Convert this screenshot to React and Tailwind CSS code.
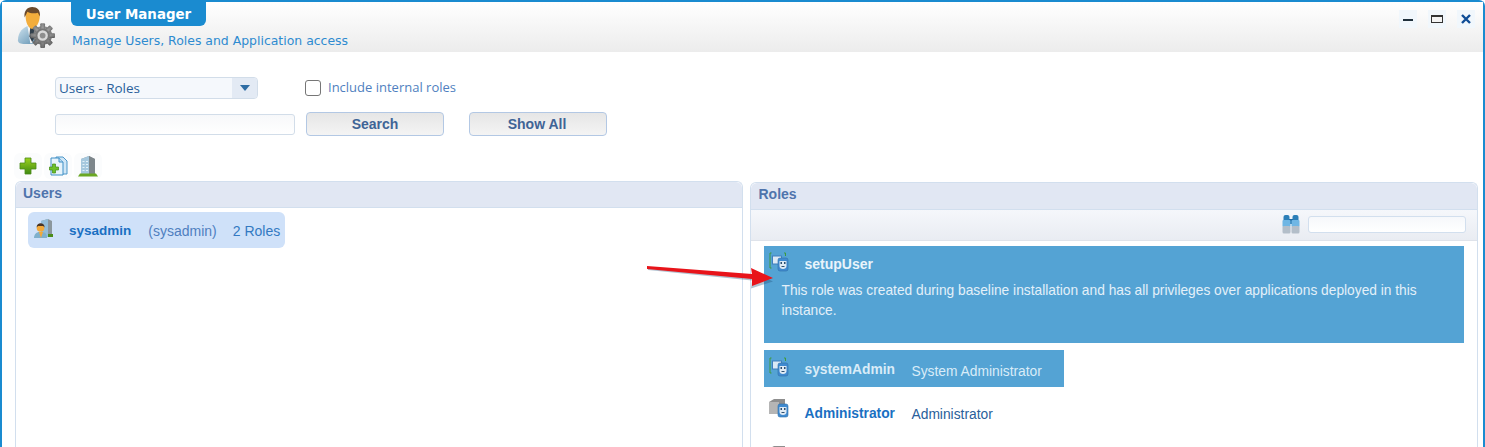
const arial = { fontFamily: '"Liberation Sans", Arial, sans-serif' };

function UserGear({ className }) {
  return (
    <svg viewBox="0 0 40 44" className={className}>
      <defs>
        <linearGradient id="ugBody" x1="0" y1="0" x2="1" y2="1"><stop offset="0" stopColor="#cfe3ef" /><stop offset="1" stopColor="#5d8faf" /></linearGradient>
        <radialGradient id="ugGear" cx="0.5" cy="0.4" r="0.7"><stop offset="0" stopColor="#b8b8b8" /><stop offset="1" stopColor="#5e5e5e" /></radialGradient>
      </defs>
      <path d="M1 36c0-9 6-14 11-15l7 1 4 13-7 5H8c-4 0-7-1-7-4z" fill="url(#ugBody)" />
      <path d="M11 21l5 2 4-2-4 18-2 0z" fill="#f4f4f4" />
      <path d="M14 22h4l1 10-3 6-3-6z" fill="#33414d" />
      <path d="M9 10c0-4 3-8 7-8s8 3 8 8c0 7-4 14-8 14s-7-7-7-14z" fill="#f3ad3c" />
      <path d="M8 12c-1-7 3-11 8-11s9 3 8 10l-2-4c-3 1-8 1-11-1z" fill="#6b4a2c" />
      <g fill="url(#ugGear)">
        <circle cx="27" cy="31" r="10" />
        <rect x="24.5" y="18" width="5" height="26" rx="1" />
        <rect x="14" y="28.5" width="26" height="5" rx="1" />
        <rect x="24.5" y="18" width="5" height="26" rx="1" transform="rotate(45 27 31)" />
        <rect x="24.5" y="18" width="5" height="26" rx="1" transform="rotate(-45 27 31)" />
      </g>
      <circle cx="27" cy="31" r="6.5" fill="#d9d9d9" stroke="#777" strokeWidth="2" />
      <circle cx="27" cy="31" r="3" fill="#8e8e8e" />
    </svg>
  );
}

function Plus({ className }) {
  return (
    <svg viewBox="0 0 18 18" className={className}>
      <defs><linearGradient id="plusG" x1="0" y1="0" x2="0" y2="1"><stop offset="0" stopColor="#9dd21f" /><stop offset="1" stopColor="#3f8a12" /></linearGradient></defs>
      <path d="M6 1h6v5h5v6h-5v5H6v-5H1V6h5z" fill="url(#plusG)" stroke="#4c8c1a" strokeWidth="0.8" />
    </svg>
  );
}

function CopyAdd({ className }) {
  return (
    <svg viewBox="0 0 20 20" className={className}>
      <path d="M8 1h7l4 4v13H8z" fill="#cfe6f6" stroke="#4d97c9" />
      <path d="M3 2h8l4 4v13H3z" fill="#e6f3fb" stroke="#3f8fc6" />
      <path d="M11 2v4h4" fill="#bcdcf1" stroke="#3f8fc6" />
      <path d="M1.500 11h3V8h3v3h3v3h-3v3h-3v-3h-3z" fill="#6cc02a" stroke="#3f8a12" strokeWidth="0.7" />
    </svg>
  );
}

function Building({ className }) {
  return (
    <svg viewBox="0 0 20 22" className={className}>
      <path d="M3 4l8-3 6 3v15H3z" fill="#8f9a9f" />
      <path d="M3 4l8-3v18H3z" fill="#a6c8de" />
      <path d="M11 1l6 3v15h-6z" fill="#7d868b" />
      <g fill="#e3f0f8">
        <rect x="4.500" y="6" width="2" height="1" /><rect x="8" y="6" width="2" height="1" />
        <rect x="4.500" y="9" width="2" height="1" /><rect x="8" y="9" width="2" height="1" />
        <rect x="4.500" y="12" width="2" height="1" /><rect x="8" y="12" width="2" height="1" />
        <rect x="4.500" y="15" width="2" height="1" /><rect x="8" y="15" width="2" height="1" />
      </g>
      <path d="M0 21.500l2-3h16l2 3z" fill="#6aa723" />
    </svg>
  );
}

function UserBuilding({ className }) {
  return (
    <svg viewBox="0 0 21 20" className={className}>
      <path d="M8 2l7-2 4 2v16H8z" fill="#8b979d" />
      <path d="M8 2l7-2v18H8z" fill="#94bdd8" />
      <path d="M15 15h5v3h-5z" fill="#4c8c1a" />
      <path d="M1 19c0-4 3-6 5-6h3c3 0 5 2 5 6z" fill="#7fb0cc" />
      <path d="M6 13h4l-2 6z" fill="#f2a93b" />
      <circle cx="7.500" cy="9" r="3.800" fill="#f2a93b" />
      <path d="M3.600 8.500c0-3 2-4.300 4-4.300s4 1.300 4 4.300l-1.500-1.500H5z" fill="#4a3524" />
    </svg>
  );
}

function Role({ kind }) {
  return (
    <svg viewBox="0 0 20 20" className="w-5 h-5 shrink-0">
      {kind === "green" ? (
        <g fill="none" stroke="#3f9a3c" strokeWidth="1">
          <path d="M2.500 1H1v15h1.500" />
          <path d="M15 1h1.500v3" />
        </g>
      ) : (
        <g>
          <path d="M0 4l5-3h11v13H0z" fill="#8e8e8e" />
          <path d="M0 4h10v12H0z" fill="#b5b5b5" />
        </g>
      )}
      {kind === "green" && <rect x="3.500" y="4" width="9" height="8" fill="#dbe9f5" stroke="#3f7fbd" />}
      <rect x="9" y="6" width="10" height="13" rx="2" fill="#3f8ad0" stroke="#2f6ea8" strokeWidth="0.6" />
      <path d="M10.500 9h7v5c0 2-1.500 3-3.500 3s-3.500-1-3.500-3z" fill="#dfeaf4" />
      <rect x="11.500" y="10" width="1.500" height="2" fill="#2d4f70" />
      <rect x="15" y="10" width="1.500" height="2" fill="#2d4f70" />
      <rect x="12.500" y="14" width="3" height="1" fill="#2d4f70" />
    </svg>
  );
}

function Binoculars({ className }) {
  return (
    <svg viewBox="0 0 18 20" className={className}>
      <rect x="1.500" y="1" width="6" height="8" rx="2" fill="#2c7fb8" />
      <rect x="10.500" y="1" width="6" height="8" rx="2" fill="#2c7fb8" />
      <rect x="7" y="5" width="4" height="5" fill="#1f6ea6" />
      <rect x="0.500" y="6" width="8" height="7" rx="1" fill="#6fb6e4" />
      <rect x="9.500" y="6" width="8" height="7" rx="1" fill="#6fb6e4" />
      <rect x="0.500" y="12" width="8" height="7.500" rx="1.500" fill="#b3bec9" />
      <rect x="9.500" y="12" width="8" height="7.500" rx="1.500" fill="#b3bec9" />
    </svg>
  );
}

function ToolIcon({ children }) {
  return <div className="w-7 h-[26px] rounded-md bg-[#fbfcfd] flex items-center justify-center">{children}</div>;
}

function WinBtn({ children }) {
  return <div className="w-[18px] h-[18px] bg-[#f1f7fc] flex items-center justify-center">{children}</div>;
}

export default function App() {
  const dejavu = { fontFamily: '"DejaVu Sans", sans-serif' };
  const open = { fontFamily: '"Open Sans", sans-serif' };
  return (
    <div className="relative w-[1485px] h-[447px] overflow-hidden bg-white" style={arial}>
      <div className="h-full border-l-2 border-r-2 border-t-2 border-[#1a8bd0] rounded-t-md flex flex-col">
        <header className="h-[50px] shrink-0 flex bg-gradient-to-b from-white to-[#ececec]">
          <UserGear className="w-[38px] h-[42px] ml-[15px] mt-[4px] shrink-0" />
          <div className="ml-[16px] flex flex-col items-start">
            <div className="w-[135px] h-[26px] -mt-[2px] bg-[#1a8bd0] rounded-b-md flex items-center justify-center text-white font-bold text-[13.4px] pt-[5px]" style={dejavu}>
              User Manager
            </div>
            <div className="mt-[8px] ml-[1px] text-[#2e8bd0] text-[12.45px] leading-[14px]" style={dejavu}>
              Manage Users, Roles and Application access
            </div>
          </div>
          <div className="ml-auto mr-[8px] mt-[8px] flex gap-[11px]">
            <WinBtn><div className="w-[10px] h-[2px] mt-[2px] bg-[#20303c]" /></WinBtn>
            <WinBtn><div className="w-[12px] h-[8px] border border-[#333] border-t-[2px] bg-[#f4f4f4]" /></WinBtn>
            <WinBtn>
              <svg viewBox="0 0 10 10" className="w-[10px] h-[10px]"><path d="M1 1l8 8M9 1l-8 8" stroke="#0f4c96" strokeWidth="2.400" fill="none" /></svg>
            </WinBtn>
          </div>
        </header>

        <main className="flex-1 min-h-0 flex flex-col pl-[13px] pr-[5px]">
          <div className="ml-[40px] mt-[25px] flex items-center h-[22px]">
            <div className="w-[203px] h-[22px] rounded-[4px] border border-[#d2dde9] bg-[#f5f8fc] flex items-center justify-between">
              <span className="ml-[3px] text-[13.5px] pt-[1px] text-[#29609a]" style={open}>Users - Roles</span>
              <div className="w-[25px] h-[20px] bg-[#e3eaf4] rounded-r-[3px] flex items-center justify-center">
                <div className="w-0 h-0 border-l-[5.5px] border-r-[5.5px] border-t-[6px] border-l-transparent border-r-transparent border-t-[#2e6da4]" />
              </div>
            </div>
            <div className="ml-[47px] w-[16px] h-[16px] rounded-[3px] border border-[#767676] bg-white" />
            <span className="ml-[7px] text-[13px] text-[#4f7fc0]" style={open}>Include internal roles</span>
          </div>

          <div className="ml-[40px] mt-[12px] flex items-center h-[25px]">
            <div className="w-[240px] h-[21px] mt-[2px] rounded-[3px] border border-[#d2dde9] bg-gradient-to-b from-[#f7f8fa] to-white" />
            <button className="ml-[11px] w-[138px] h-[24px] pt-[1px] rounded-[4px] border border-[#b3c8e4] bg-gradient-to-b from-[#e6e6e6] to-[#f4f4f4] text-[#3f6496] font-bold text-[14px]">Search</button>
            <button className="ml-[25px] w-[138px] h-[24px] pt-[1px] pr-[2px] rounded-[4px] border border-[#b3c8e4] bg-gradient-to-b from-[#e6e6e6] to-[#f4f4f4] text-[#3f6496] font-bold text-[14px]">Show All</button>
          </div>

          <div className="mt-[17px] -ml-[1px] flex gap-[2px] h-[26px]">
            <ToolIcon><Plus className="w-[18px] h-[18px]" /></ToolIcon>
            <ToolIcon><CopyAdd className="w-5 h-5" /></ToolIcon>
            <ToolIcon><Building className="w-5 h-[22px]" /></ToolIcon>
          </div>

          <div className="flex-1 min-h-0 flex gap-[7px] items-start mt-[2px]">
            <section className="w-[728px] h-[270px] border border-[#d2dfee] border-b-0 rounded-t-md">
              <div className="h-[26px] bg-[#e1e7f3] border-b border-[#d2dfee] rounded-t-md px-[7px] flex items-center">
                <h2 className="font-bold text-[14px] text-[#4f74ac] -mt-[2px]">Users</h2>
              </div>
              <div className="ml-[12px] mt-[4px] w-[257px] h-[36px] rounded-md bg-[#cfe1f9] flex items-center">
                <UserBuilding className="w-[21px] h-[20px] ml-[5px] -mt-[2px]" />
                <span className="ml-[15px] pt-[3px] font-bold text-[13.5px] text-[#1a70c2]">sysadmin</span>
                <span className="ml-[17px] pt-[3px] text-[14px] text-[#4f7fc0]">(sysadmin)</span>
                <span className="ml-[16px] pt-[3px] text-[14px] text-[#3379c2]">2 Roles</span>
              </div>
            </section>

            <section className="w-[729px] h-[270px] mt-[1px] border border-[#d2dfee] border-b-0 rounded-t-md">
              <div className="h-[27px] bg-[#e1e7f3] border-b border-[#d2dfee] rounded-t-md px-[8px] flex items-center">
                <h2 className="font-bold text-[14px] text-[#4f74ac] -mt-[3px]">Roles</h2>
              </div>
              <div className="h-[31px] border-b border-[#dfe3ea] bg-gradient-to-b from-[#f5f7fb] to-[#e9ecf2] flex items-center justify-end pr-[11px]">
                <Binoculars className="w-[18px] h-[20px] mr-[8px] -mt-[2px]" />
                <div className="w-[158px] h-[17px] -mt-[2px] rounded-[3px] border border-[#d2dfee] bg-gradient-to-b from-[#f6f8fb] to-white" />
              </div>
              <div className="ml-[13px] mt-[5px] w-[700px] h-[97px] bg-[#54a3d4] pt-[6px]">
                <div className="flex items-center h-[20px] ml-[5px]">
                  <Role kind="green" />
                  <span className="ml-[16px] pt-[4px] font-bold text-[14px] text-[#e9f4fb]">setupUser</span>
                </div>
                <p className="ml-[18px] mt-[9px] w-[660px] text-[13.75px] leading-[20px] text-[#e3f0f9]">
                  This role was created during baseline installation and has all privileges over applications deployed in this instance.
                </p>
              </div>
              <div className="ml-[13px] mt-[7px] w-[300px] h-[37px] bg-[#54a3d4] flex items-center">
                <div className="ml-[5px] -mt-[3px]"><Role kind="green" /></div>
                <span className="ml-[16px] w-[107px] pt-[3px] font-bold text-[13.8px] text-[#d9ecf8]">systemAdmin</span>
                <span className="pt-[8px] text-[13.8px] text-[#d9ecf8]">System Administrator</span>
              </div>
              <div className="ml-[13px] w-[300px] h-[45px] flex items-center">
                <div className="ml-[5px] -mt-[3px]"><Role kind="gray" /></div>
                <span className="ml-[16px] w-[107px] pt-[11px] -mt-[1px] font-bold text-[13.8px] text-[#1a70c2]">Administrator</span>
                <span className="pt-[12px] text-[13.8px] text-[#29609a]">Administrator</span>
              </div>
              <div className="ml-[18px] mt-[13px]"><Role kind="gray" /></div>
            </section>
          </div>
        </main>
      </div>

      <svg viewBox="0 0 135 30" className="absolute left-[645px] top-[262px] w-[135px] h-[30px] pointer-events-none">
        <path d="M3 6l104 10.500-1 8 22-7-20-10-1 6L3 3.500z" fill="#1f4f78" opacity="0.35" transform="translate(0 2)" />
        <path d="M2 4l105 8-1-6 22 10-21 8 0-7L2 7z" fill="#e8141a" />
      </svg>
    </div>
  );
}
